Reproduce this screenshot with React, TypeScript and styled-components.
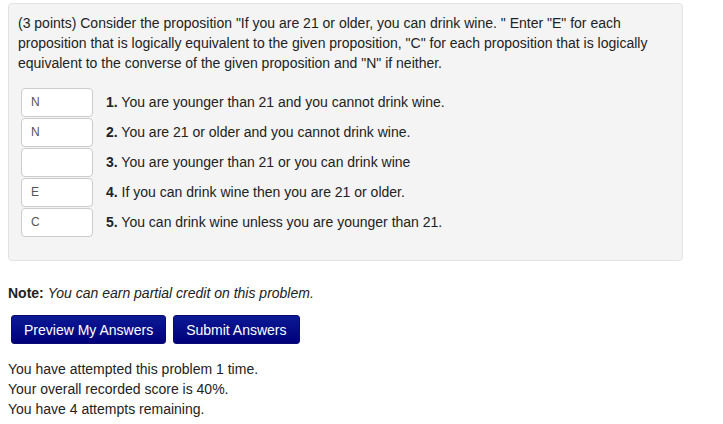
import React from "react";
import styled, { createGlobalStyle } from "styled-components";

const GlobalStyle = createGlobalStyle`
  html, body {
    margin: 0;
    padding: 0;
    background: #fff;
  }
  body {
    font-family: "Liberation Sans", Arial, sans-serif;
    font-size: 14px;
    color: #222;
  }
`;

const Page = styled.div`
  padding: 3px 40px 0 8px;
`;

const Well = styled.div`
  background: #f4f4f4;
  border: 1px solid #e3e3e3;
  border-radius: 4px;
  padding: 9px 9px 23px 9px;
  line-height: 20px;
`;

const Prompt = styled.p`
  margin: 0 0 14px 0;
`;

const Items = styled.div`
  display: flex;
  flex-direction: column;
  padding-left: 3px;
`;

const Item = styled.div`
  display: flex;
  align-items: center;
  height: 30px;
  gap: 13px;
`;

const AnswerBox = styled.input`
  box-sizing: border-box;
  width: 72px;
  height: 29px;
  padding: 0 9px;
  border: 1px solid #cccccc;
  border-radius: 4px;
  background: #fff;
  font-family: "Liberation Sans", Arial, sans-serif;
  font-size: 12px;
  color: #555;
  outline: none;
`;

const Label = styled.span`
  color: #222;
`;

const Num = styled.b`
  font-weight: 700;
`;

const Note = styled.p`
  margin: 22px 0 0 0;
  line-height: 20px;
`;

const Buttons = styled.div`
  display: flex;
  gap: 7px;
  margin: 12px 0 0 3px;
`;

const Button = styled.button`
  box-sizing: border-box;
  height: 29px;
  padding: 0 12px;
  border: 1px solid #0a0a70;
  border-radius: 3px;
  background: linear-gradient(#0b1a94, #00007a);
  color: #fff;
  font-family: "Liberation Sans", Arial, sans-serif;
  font-size: 14px;
  cursor: pointer;
`;

const Status = styled.div`
  margin-top: 15px;
  line-height: 20px;
  color: #222;
`;

const items = [
  { value: "N", text: "You are younger than 21 and you cannot drink wine." },
  { value: "N", text: "You are 21 or older and you cannot drink wine." },
  { value: "", text: "You are younger than 21 or you can drink wine" },
  { value: "E", text: "If you can drink wine then you are 21 or older." },
  { value: "C", text: "You can drink wine unless you are younger than 21." },
];

export default function App() {
  return (
    <Page>
      <GlobalStyle />
      <Well>
        <Prompt>
          (3 points) Consider the proposition "If you are 21 or older, you can
          drink wine. " Enter "E" for each proposition that is logically
          equivalent to the given proposition, "C" for each proposition that is
          logically equivalent to the converse of the given proposition and "N"
          if neither.
        </Prompt>
        <Items>
          {items.map((it, i) => (
            <Item key={i}>
              <AnswerBox defaultValue={it.value} />
              <Label>
                <Num>{i + 1}.</Num> {it.text}
              </Label>
            </Item>
          ))}
        </Items>
      </Well>
      <Note>
        <b>Note:</b> <i>You can earn partial credit on this problem.</i>
      </Note>
      <Buttons>
        <Button>Preview My Answers</Button>
        <Button>Submit Answers</Button>
      </Buttons>
      <Status>
        You have attempted this problem 1 time.
        <br />
        Your overall recorded score is 40%.
        <br />
        You have 4 attempts remaining.
      </Status>
    </Page>
  );
}
